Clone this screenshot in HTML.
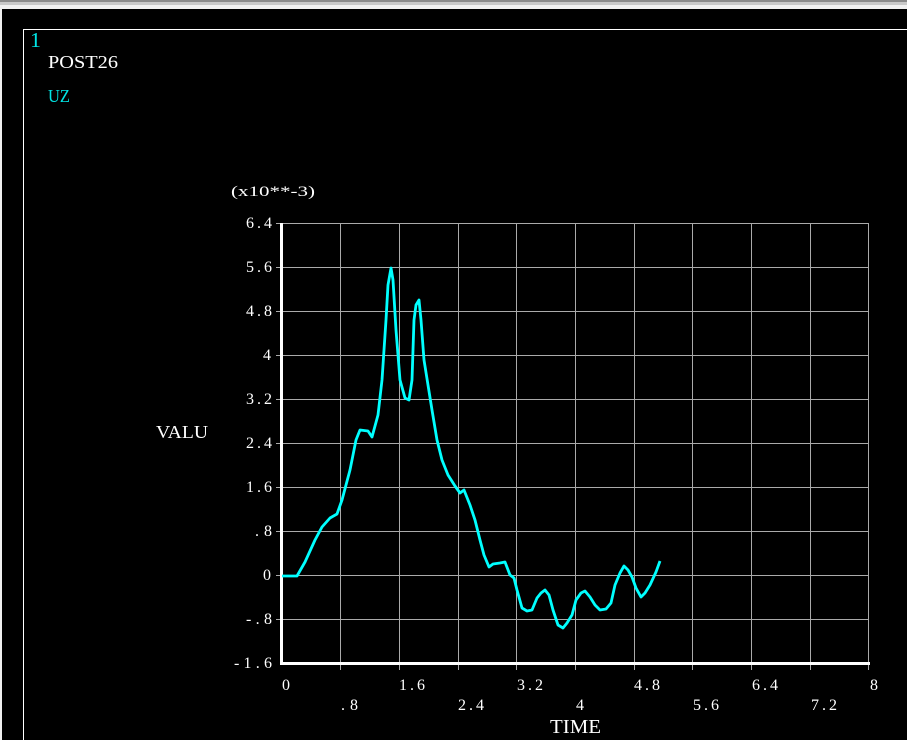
<!DOCTYPE html>
<html><head><meta charset="utf-8"><style>
html,body{margin:0;padding:0;background:#000;width:907px;height:740px;overflow:hidden}
svg{display:block}
text{font-family:"Liberation Serif","DejaVu Serif",serif}
</style></head><body>
<svg width="907" height="740" xmlns="http://www.w3.org/2000/svg">
<rect x="0" y="0" width="907" height="740" fill="#000"/>
<rect x="0" y="0" width="907" height="2" fill="#8a8a8a"/>
<rect x="0" y="2" width="907" height="3" fill="#c8c8c8"/>
<rect x="0" y="5" width="907" height="4" fill="#f0f0f0"/>
<rect x="0" y="9" width="2" height="731" fill="#f0f0f0"/>
<rect x="23.5" y="29.5" width="900" height="720" fill="none" stroke="#fff" stroke-width="1"/>
<text x="30" y="47" fill="#00e5e5" font-size="21" textLength="11" lengthAdjust="spacingAndGlyphs">1</text>
<text x="48" y="68" fill="#fff" font-size="18" textLength="70" lengthAdjust="spacingAndGlyphs">POST26</text>
<text x="48" y="102" fill="#00e5e5" font-size="18" textLength="22" lengthAdjust="spacingAndGlyphs">UZ</text>
<text x="231" y="196" fill="#fff" font-size="15" textLength="84" lengthAdjust="spacingAndGlyphs">(x10**-3)</text>
<text x="156" y="438" fill="#fff" font-size="18" textLength="52" lengthAdjust="spacingAndGlyphs">VALU</text>
<g stroke="#aaa" stroke-width="1">
<line x1="340.5" y1="223" x2="340.5" y2="670"/><line x1="399.5" y1="223" x2="399.5" y2="670"/>
<line x1="458.5" y1="223" x2="458.5" y2="670"/><line x1="516.5" y1="223" x2="516.5" y2="670"/>
<line x1="575.5" y1="223" x2="575.5" y2="670"/><line x1="634.5" y1="223" x2="634.5" y2="670"/>
<line x1="692.5" y1="223" x2="692.5" y2="670"/><line x1="751.5" y1="223" x2="751.5" y2="670"/>
<line x1="810.5" y1="223" x2="810.5" y2="670"/><line x1="868.5" y1="223" x2="868.5" y2="670"/>
<line x1="276" y1="223.5" x2="869" y2="223.5"/><line x1="276" y1="267.5" x2="869" y2="267.5"/>
<line x1="276" y1="311.5" x2="869" y2="311.5"/><line x1="276" y1="355.5" x2="869" y2="355.5"/>
<line x1="276" y1="399.5" x2="869" y2="399.5"/><line x1="276" y1="443.5" x2="869" y2="443.5"/>
<line x1="276" y1="487.5" x2="869" y2="487.5"/><line x1="276" y1="531.5" x2="869" y2="531.5"/>
<line x1="276" y1="575.5" x2="869" y2="575.5"/><line x1="276" y1="619.5" x2="869" y2="619.5"/>
</g>
<rect x="280" y="223" width="3" height="442" fill="#fff"/>
<rect x="280" y="662" width="590" height="3" fill="#fff"/>
<g fill="#fff" font-size="16" lengthAdjust="spacingAndGlyphs">
<text x="246" y="228" textLength="26">6.4</text><text x="246" y="272" textLength="26">5.6</text><text x="246" y="316" textLength="26">4.8</text>
<text x="263" y="360" textLength="9">4</text><text x="246" y="404" textLength="26">3.2</text><text x="246" y="448" textLength="26">2.4</text>
<text x="246" y="492" textLength="26">1.6</text><text x="255" y="536" textLength="17">.8</text><text x="263" y="580" textLength="9">0</text>
<text x="246" y="624" textLength="26">-.8</text><text x="234" y="668" textLength="38">-1.6</text>
</g>
<g fill="#fff" font-size="16" lengthAdjust="spacingAndGlyphs">
<text x="282" y="690" textLength="9">0</text><text x="399" y="690" textLength="26">1.6</text><text x="517" y="690" textLength="26">3.2</text>
<text x="634" y="690" textLength="26">4.8</text><text x="752" y="690" textLength="26">6.4</text><text x="870" y="690" textLength="9">8</text>
<text x="341" y="710" textLength="17">.8</text><text x="458" y="710" textLength="26">2.4</text><text x="576" y="710" textLength="9">4</text>
<text x="693" y="710" textLength="26">5.6</text><text x="811" y="710" textLength="26">7.2</text>
</g>
<text x="550" y="733" fill="#fff" font-size="20" textLength="51" lengthAdjust="spacingAndGlyphs">TIME</text>
<polyline fill="none" stroke="#00ffff" stroke-width="2.8" stroke-linejoin="round" points="282,576 297,576 305,562 315,540 322,527 330,518 337,514 342,500 350,470 356,440 360,430 368,431 372,437 378,415 382,380 386,320 388,285 391,268 393,280 396,330 400,380 405,398 409,400 412,380 414,320 416,305 419,300 421,320 424,360 428,385 432,410 437,440 442,460 448,475 455,486 460,493 464,490 470,505 475,520 480,540 484,555 489,567 493,564 500,563 505,562 510,575 514,578 517,590 522,608 527,611 532,610 537,598 541,593 545,590 549,595 553,610 558,625 563,628 567,623 572,615 576,600 581,593 585,591 590,597 595,605 600,610 606,609 611,603 615,585 620,573 624,566 628,570 632,577 636,588 641,597 645,593 650,585 656,572 660,561"/>
</svg>
</body></html>
